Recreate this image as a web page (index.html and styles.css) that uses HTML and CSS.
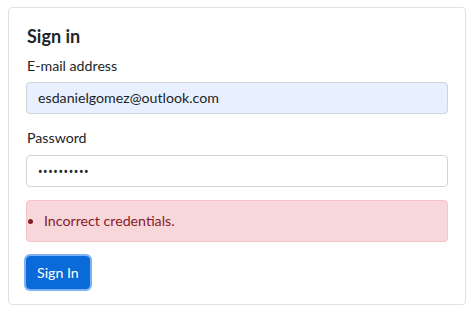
FILE: index.html
```html
<!DOCTYPE html>
<html lang="en">
<head>
<meta charset="utf-8">
<link rel="stylesheet" href="styles.css">
</head>
<body>
<div class="card">
  <h3 class="title">Sign in</h3>
  <label class="label" for="email">E-mail address</label>
  <div class="input autofill" id="email">esdanielgomez@outlook.com</div>
  <label class="label label-pw" for="pw">Password</label>
  <div class="input" id="pw"><span class="dots">••••••••••</span></div>
  <div class="alert">
    <ul class="alert-list"><li>Incorrect credentials.</li></ul>
  </div>
  <button class="btn">Sign In</button>
</div>
</body>
</html>
```
FILE: styles.css
```css
html, body { margin: 0; padding: 0; background: #fff; }
body {
  font-family: Lato, "Noto Sans", sans-serif;
  color: #212529;
  padding: 7px 8px 0 8px;
}
.card {
  border: 1px solid #dee2e6;
  border-radius: 4px;
  padding: 16px 17px 15px 17px;
  display: flex;
  flex-direction: column;
  align-items: flex-start;
  height: 298px;
  box-sizing: border-box;
}
.title {
  margin: 0 0 8px 1px;
  font-size: 18px;
  line-height: 24px;
  font-weight: 700;
}
.label {
  font-size: 14.2px;
  line-height: 20px;
  margin: 0 0 6px 1px;
  color: #212529;
}
.label-pw { margin-top: 14px; margin-bottom: 7px; }
.input {
  align-self: stretch;
  box-sizing: border-box;
  height: 32px;
  border: 1px solid #ced4da;
  border-radius: 4px;
  padding: 0 11px;
  font-size: 14.2px;
  line-height: 30px;
  color: #212529;
  background: #fff;
}
.autofill { background: #e8f0fe; }
.dots { font-size: 12px; letter-spacing: 0.6px; font-family: "Noto Sans", sans-serif; }
.alert {
  align-self: stretch;
  margin-top: 13px;
  height: 42px;
  box-sizing: border-box;
  background: #f8d7da;
  border: 1px solid #f5c2c7;
  border-radius: 4px;
  color: #842029;
  display: flex;
  align-items: center;
}
.alert-list {
  margin: 0;
  padding-left: 17px;
  font-size: 14.2px;
  line-height: 20px;
}
.btn {
  margin-top: 14px;
  height: 33px;
  padding: 0 10px;
  font-family: inherit;
  font-size: 14.2px;
  color: #fff;
  background: #0a6ad8;
  border: 1px solid #0a6ad8;
  border-radius: 4px;
  box-shadow: 0 0 0 2px #7fb2f5;
}
```
